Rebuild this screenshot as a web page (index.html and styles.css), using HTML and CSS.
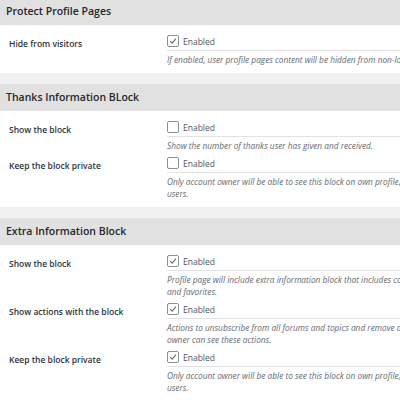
FILE: index.html
```html
<!DOCTYPE html>
<html>
<head>
<meta charset="utf-8">
<link rel="stylesheet" href="styles.css">
</head>
<body>
<div class="page">
  <div class="section">
    <h2 class="section-title">Protect Profile Pages</h2>
    <div class="panel">
      <div class="row">
        <div class="label">Hide from visitors</div>
        <div class="field">
          <div class="control"><span class="box checked"><svg viewBox="0 0 12 12"><path d="M2.6 6.2 L5 8.6 L9.6 3.2" /></svg></span><span class="opt">Enabled</span></div>
          <div class="desc">If enabled, user profile pages content will be hidden from non-logged in visitors.</div>
        </div>
      </div>
    </div>
  </div>

  <div class="section">
    <h2 class="section-title">Thanks Information BLock</h2>
    <div class="panel">
      <div class="row">
        <div class="label">Show the block</div>
        <div class="field">
          <div class="control"><span class="box"></span><span class="opt">Enabled</span></div>
          <div class="desc">Show the number of thanks user has given and received.</div>
        </div>
      </div>
      <div class="row">
        <div class="label">Keep the block private</div>
        <div class="field">
          <div class="control"><span class="box"></span><span class="opt">Enabled</span></div>
          <div class="desc">Only account owner will be able to see this block on own profile, other<br>users.</div>
        </div>
      </div>
    </div>
  </div>

  <div class="section">
    <h2 class="section-title">Extra Information Block</h2>
    <div class="panel">
      <div class="row">
        <div class="label">Show the block</div>
        <div class="field">
          <div class="control"><span class="box checked"><svg viewBox="0 0 12 12"><path d="M2.6 6.2 L5 8.6 L9.6 3.2" /></svg></span><span class="opt">Enabled</span></div>
          <div class="desc">Profile page will include extra information block that includes counts for topics, replies,<br>and favorites.</div>
        </div>
      </div>
      <div class="row">
        <div class="label">Show actions with the block</div>
        <div class="field">
          <div class="control"><span class="box checked"><svg viewBox="0 0 12 12"><path d="M2.6 6.2 L5 8.6 L9.6 3.2" /></svg></span><span class="opt">Enabled</span></div>
          <div class="desc">Actions to unsubscribe from all forums and topics and remove all favorites. Only account<br>owner can see these actions.</div>
        </div>
      </div>
      <div class="row">
        <div class="label">Keep the block private</div>
        <div class="field">
          <div class="control"><span class="box checked"><svg viewBox="0 0 12 12"><path d="M2.6 6.2 L5 8.6 L9.6 3.2" /></svg></span><span class="opt">Enabled</span></div>
          <div class="desc">Only account owner will be able to see this block on own profile, other<br>users.</div>
        </div>
      </div>
    </div>
  </div>
</div>
</body>
</html>
```
FILE: styles.css
```css
html, body {
  margin: 0;
  padding: 0;
}
body {
  background: #f1f1f1;
  overflow: hidden;
  font-family: "Open Sans", "Noto Sans", sans-serif;
  color: #23282d;
}
.page {
  width: 640px;
  margin-top: -2px;
}
.section {
  margin-bottom: 11px;
}
.section-title {
  margin: 0;
  height: 27px;
  line-height: 27px;
  padding-left: 6px;
  background: #e1e1e1;
  font-size: 10.5px;
  font-weight: 600;
  color: #23282d;
}
.panel {
  background: #fff;
  padding: 7px 0 5px;
}
.row {
  display: grid;
  grid-template-columns: 158px 1fr;
  padding-left: 9px;
  margin-bottom: 2px;
}
.label {
  font-size: 8.5px;
  font-weight: 600;
  line-height: 18px;
  padding-top: 3px;
  color: #2c3338;
}
.control {
  height: 18px;
  display: flex;
  align-items: center;
  border-bottom: 1px solid #e2e2e2;
}
.box {
  width: 10px;
  height: 10px;
  border: 1px solid #8c8f94;
  border-radius: 2px;
  background: #fff;
  display: flex;
}
.box svg {
  width: 10px;
  height: 10px;
  fill: none;
  stroke: #6d6d6d;
  stroke-width: 1.4;
}
.opt {
  margin-left: 4px;
  font-size: 8.5px;
  color: #50575e;
}
.desc {
  margin-top: 3px;
  font-size: 8.3px;
  line-height: 12px;
  font-style: italic;
  color: #646970;
  white-space: nowrap;
}
```
